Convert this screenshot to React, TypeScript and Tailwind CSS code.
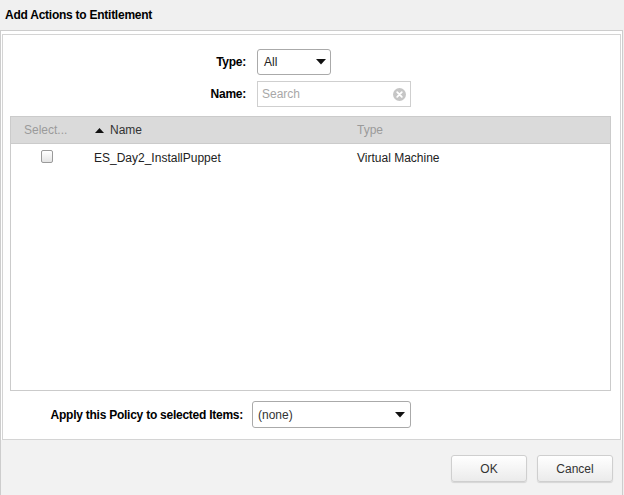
const Caret = ({ className = "" }: { className?: string }) => (
  <svg width="10" height="6" viewBox="0 0 10 6" className={className}>
    <path d="M0 0 H10 L5 5.5 Z" fill="#111" />
  </svg>
)

const ClearIcon = () => (
  <svg width="13" height="13" viewBox="0 0 13 13">
    <circle cx="6.5" cy="6.5" r="6.5" fill="#c6c6c6" />
    <path d="M4.2 4.2 L8.8 8.8 M8.8 4.2 L4.2 8.8" stroke="#fff" strokeWidth="1.8" strokeLinecap="round" />
  </svg>
)

const Checkbox = () => (
  <span className="block w-[12px] h-[13px] rounded-[2px] border border-[#9a9a9a] bg-linear-to-b from-white to-[#e4e4e4]" />
)

const rows = [{ name: "ES_Day2_InstallPuppet", type: "Virtual Machine" }]

export default function App() {
  return (
    <div className="w-[624px] h-[495px] flex flex-col bg-[#f0f0f0] font-['Liberation_Sans',Arial,sans-serif] text-[12px] text-[#222]">
      {/* Dialog title */}
      <div className="h-[30px] flex items-center pl-[5px] font-bold tracking-[-0.25px] text-black">
        Add Actions to Entitlement
      </div>

      <div className="w-[623px] flex-1 flex flex-col border-x border-t border-[#cdcdcd]">
        <div className="bg-white pt-[3px] px-[1px]">
          <div className="border border-[#d4d4d4] bg-white h-[406px] flex flex-col">
            {/* Filters */}
            <div className="mt-[14px] grid grid-cols-[243px_auto] gap-x-[11px] gap-y-[6px] items-center">
              <span className="text-right font-bold tracking-[-0.25px] text-black">Type:</span>
              <div className="w-[74px] h-[26px] border border-[#aaa] rounded-[3px] flex items-center justify-between pl-[6px] pr-[4px] bg-white">
                <span>All</span>
                <Caret />
              </div>
              <span className="text-right font-bold tracking-[-0.25px] text-black">Name:</span>
              <div className="w-[154px] h-[26px] border border-[#cfcfcf] flex items-center justify-between pl-[4px] pr-[4px]">
                <span className="text-[#a8a8a8]">Search</span>
                <ClearIcon />
              </div>
            </div>

            {/* Table */}
            <div className="mt-[9px] ml-[7px] w-[601px] h-[275px] border border-[#cbcbcb] flex flex-col">
              <div className="h-[27px] bg-[#dadada] border-b border-[#cbcbcb] flex items-center">
                <div className="w-[72px] pl-[13px] text-[#9a9a9a] truncate">Select...</div>
                <div className="w-[262px] pl-[12px] flex items-center gap-[6px] text-[#333]">
                  <svg width="9" height="5" viewBox="0 0 9 5">
                    <path d="M0 5 H9 L4.5 0 Z" fill="#111" />
                  </svg>
                  <span>Name</span>
                </div>
                <div className="flex-1 pl-[12px] text-[#9a9a9a]">Type</div>
              </div>
              {rows.map((r) => (
                <div key={r.name} className="h-[27px] flex items-center">
                  <div className="w-[72px] flex justify-center pb-[2px]">
                    <Checkbox />
                  </div>
                  <div className="w-[262px] pl-[11px]">{r.name}</div>
                  <div className="flex-1 pl-[12px]">{r.type}</div>
                </div>
              ))}
            </div>

            {/* Apply policy */}
            <div className="mt-[10px] flex items-center">
              <span className="w-[240px] text-right font-bold tracking-[-0.25px] text-black">
                Apply this Policy to selected Items:
              </span>
              <div className="ml-[9px] w-[159px] h-[27px] border border-[#aaa] rounded-[3px] flex items-center justify-between pl-[5px] pr-[5px]">
                <span className="text-[#333]">(none)</span>
                <Caret />
              </div>
            </div>
          </div>
        </div>

        {/* Footer */}
        <div className="flex-1 bg-[#f2f2f2] flex justify-end gap-[10px] pt-[15px] pr-[9px]">
          {["OK", "Cancel"].map((label) => (
            <button
              key={label}
              className="w-[76px] h-[27px] rounded-[3px] border border-[#cfcfcf] bg-linear-to-b from-white to-[#ebebeb] shadow-[0_1px_1px_rgba(0,0,0,0.12)] text-[#333] text-[12px]"
            >
              {label}
            </button>
          ))}
        </div>
      </div>
    </div>
  )
}
